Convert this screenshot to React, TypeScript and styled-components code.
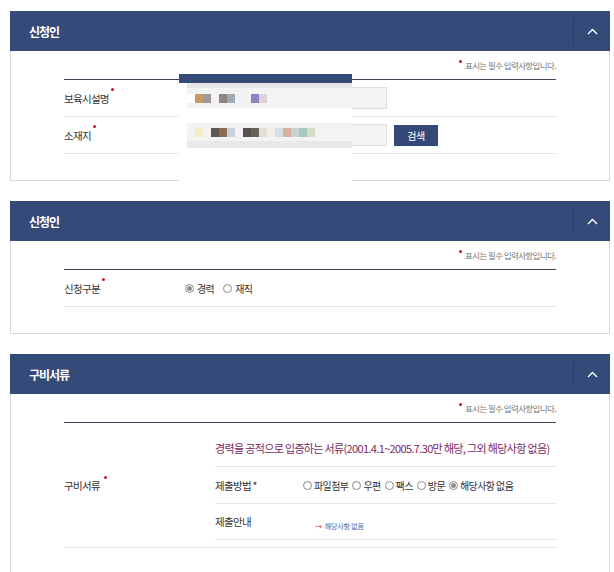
import styled, { createGlobalStyle } from "styled-components";

const GlobalStyle = createGlobalStyle`
  body {
    margin: 0;
    background: #fff;
    font-family: "Noto Sans CJK KR", "Noto Sans", sans-serif;
    color: #333;
  }
`;

const Page = styled.div`
  display: flex;
  flex-direction: column;
  gap: 20px;
  padding: 11px 5px 0 10px;
  width: 600px;
  height: 561px;
  overflow: hidden;
`;

const Panel = styled.section`
  position: relative;
`;

const Header = styled.div`
  height: 40px;
  background: #344a79;
  display: flex;
  align-items: center;
  justify-content: space-between;
  padding-left: 19px;
`;

const Title = styled.h2`
  margin: 0;
  color: #fff;
  font-size: 12px;
  font-weight: 700;
  letter-spacing: -1px;
`;

const Toggle = styled.button`
  width: 37px;
  height: 27px;
  border: none;
  border-left: 1px solid #2b3f68;
  background: transparent;
  display: flex;
  align-items: center;
  justify-content: center;
  padding: 0;
`;

const Body = styled.div`
  border: 1px solid #d9d9d9;
  border-top: none;
  padding: 0 53px 26px 53px;
`;

const Note = styled.p`
  margin: 0;
  height: 28px;
  box-sizing: border-box;
  padding-top: 8px;
  text-align: right;
  font-size: 8.5px;
  letter-spacing: -0.6px;
  color: #777;
`;

const Dot = styled.span<{ $top?: number }>`
  display: inline-block;
  width: 3px;
  height: 3px;
  border-radius: 50%;
  background: #c4161c;
  vertical-align: top;
  margin: ${(p) => p.$top ?? -2}px 3px 0 2px;
`;

const Table = styled.div`
  border-top: 1px solid #3b4658;
`;

const Row = styled.div<{ $label?: number }>`
  display: grid;
  grid-template-columns: ${(p) => p.$label ?? 121}px 1fr;
  align-items: center;
  border-bottom: 1px solid #e6e6e6;
  min-height: 36px;
`;

const Label = styled.div`
  font-size: 10.5px;
  letter-spacing: -0.7px;
  color: #333;
`;

const Value = styled.div`
  display: flex;
  align-items: center;
  gap: 7px;
`;

const Input = styled.div`
  width: 200px;
  height: 20px;
  background: #f3f3f3;
  border: 1px solid #ddd;
`;

const Button = styled.button`
  width: 44px;
  height: 21px;
  border: none;
  background: #33497a;
  color: #fff;
  font-family: inherit;
  font-size: 10px;
  letter-spacing: -0.5px;
  padding: 0;
`;

const Radios = styled.div<{ $gap?: number }>`
  display: flex;
  align-items: center;
  gap: ${(p) => p.$gap ?? 9}px;
  font-size: 10px;
  letter-spacing: -0.6px;
  color: #333;
`;

const RadioItem = styled.label<{ $gap?: number }>`
  display: inline-flex;
  align-items: center;
  gap: ${(p) => p.$gap ?? 2}px;
`;

const Circle = styled.span<{ $on?: boolean }>`
  width: 7px;
  height: 7px;
  border-radius: 50%;
  border: 1px solid #8a8a8a;
  background: #fff;
  display: inline-flex;
  align-items: center;
  justify-content: center;
  &::after {
    content: "";
    width: 5px;
    height: 5px;
    border-radius: 50%;
    background: ${(p) => (p.$on ? "#8f8f8f" : "transparent")};
  }
`;

const SubTable = styled.div`
  padding-bottom: 7px;
`;

const SubRow = styled.div<{ $h: number }>`
  display: grid;
  grid-template-columns: 88px 1fr;
  align-items: center;
  height: ${(p) => p.$h}px;
  border-bottom: 1px solid #e6e6e6;
`;

const Notice = styled.div`
  grid-column: 1 / -1;
  font-size: 11px;
  letter-spacing: -0.65px;
  color: #7b1f5e;
  padding-top: 6px;
`;

const Guide = styled.span`
  margin-left: 12px;
  font-size: 7px;
  letter-spacing: -0.2px;
  color: #3c6aa8;
  &::before {
    content: "→";
    color: #d9272e;
    margin-right: 3px;
  }
`;

/* privacy mask laid over the first panel */
const Mask = styled.div`
  position: absolute;
  left: 169px;
  top: 40px;
  width: 173px;
  height: 144px;
  background: #fff;
  padding-top: 23px;
  box-sizing: border-box;
`;

const MaskBar = styled.div`
  height: 9px;
  background: #344a79;
`;

const MaskField = styled.div<{ $band: "top" | "bottom" }>`
  margin-left: 8px;
  height: 20px;
  background: #f3f3f3;
  display: flex;
  align-items: center;
  ${(p) =>
    p.$band === "top"
      ? "border-top: 5px solid #e6e6e6;"
      : "border-bottom: 7px solid #e8e8e8; margin-top: 15px; height: 18px;"}
`;

const Pixel = styled.span<{ $c: string }>`
  width: 8px;
  height: 9px;
  background: ${(p) => p.$c};
  flex: none;
`;

const Chevron = () => (
  <svg width="11" height="7" viewBox="0 0 11 7">
    <polyline points="1,6 5.5,1.5 10,6" fill="none" stroke="#fff" strokeWidth="1.4" />
  </svg>
);

const pixels1 = ["#fff", "#c89c60", "#9c9a9a", "#f3f3f3", "#8e8480", "#9eabb8", "#f1f1f4", "#f3f3f3", "#8a86c6", "#e2d0d8"];
const pixels2 = [
  "#f3f3f3", "#f3efc4", "#f3f3f3", "#5f5850", "#8d6b50", "#cbcfe0", "#f3f3f3", "#56524b",
  "#67615a", "#e6dfd8", "#f1eee8", "#d6e0ea", "#d9b19c", "#cdd1d1", "#a8c9c1", "#d6dcc8",
];

const PanelHead = ({ title }: { title: string }) => (
  <Header>
    <Title>{title}</Title>
    <Toggle aria-label="접기">
      <Chevron />
    </Toggle>
  </Header>
);

const RequiredNote = () => (
  <Note>
    <Dot $top={1} />표시는 필수 입력사항입니다.
  </Note>
);

export default function App() {
  return (
    <>
      <GlobalStyle />
      <Page>
        <Panel>
          <PanelHead title="신청인" />
          <Body>
            <RequiredNote />
            <Table>
              <Row>
                <Label>
                  보육시설명<Dot $top={-3} />
                </Label>
                <Value>
                  <Input />
                </Value>
              </Row>
              <Row>
                <Label>
                  소재지<Dot $top={-3} />
                </Label>
                <Value>
                  <Input />
                  <Button>검색</Button>
                </Value>
              </Row>
            </Table>
          </Body>
          <Mask>
            <MaskBar />
            <MaskField $band="top">
              {pixels1.map((c, i) => (
                <Pixel key={i} $c={c} />
              ))}
            </MaskField>
            <MaskField $band="bottom">
              {pixels2.map((c, i) => (
                <Pixel key={i} $c={c} />
              ))}
            </MaskField>
          </Mask>
        </Panel>

        <Panel>
          <PanelHead title="신청인" />
          <Body>
            <RequiredNote />
            <Table>
              <Row>
                <Label>
                  신청구분<Dot $top={-3} />
                </Label>
                <Radios>
                  <RadioItem $gap={3}>
                    <Circle $on />
                    경력
                  </RadioItem>
                  <RadioItem $gap={3}>
                    <Circle />
                    재직
                  </RadioItem>
                </Radios>
              </Row>
            </Table>
          </Body>
        </Panel>

        <Panel>
          <PanelHead title="구비서류" />
          <Body>
            <RequiredNote />
            <Table>
              <Row $label={151}>
                <Label>
                  구비서류 <Dot $top={-2} />
                </Label>
                <SubTable>
                  <SubRow $h={43}>
                    <Notice>
                      경력을 공적으로 입증하는 서류(2001.4.1~2005.7.30만 해당, 그외 해당사항 없음)
                    </Notice>
                  </SubRow>
                  <SubRow $h={36}>
                    <Label>제출방법 *</Label>
                    <Radios $gap={4}>
                      <RadioItem>
                        <Circle />
                        파일첨부
                      </RadioItem>
                      <RadioItem>
                        <Circle />
                        우편
                      </RadioItem>
                      <RadioItem>
                        <Circle />
                        팩스
                      </RadioItem>
                      <RadioItem>
                        <Circle />
                        방문
                      </RadioItem>
                      <RadioItem>
                        <Circle $on />
                        해당사항 없음
                      </RadioItem>
                    </Radios>
                  </SubRow>
                  <SubRow $h={35}>
                    <Label>제출안내</Label>
                    <div>
                      <Guide>해당사항 없음</Guide>
                    </div>
                  </SubRow>
                </SubTable>
              </Row>
            </Table>
          </Body>
        </Panel>
      </Page>
    </>
  );
}
